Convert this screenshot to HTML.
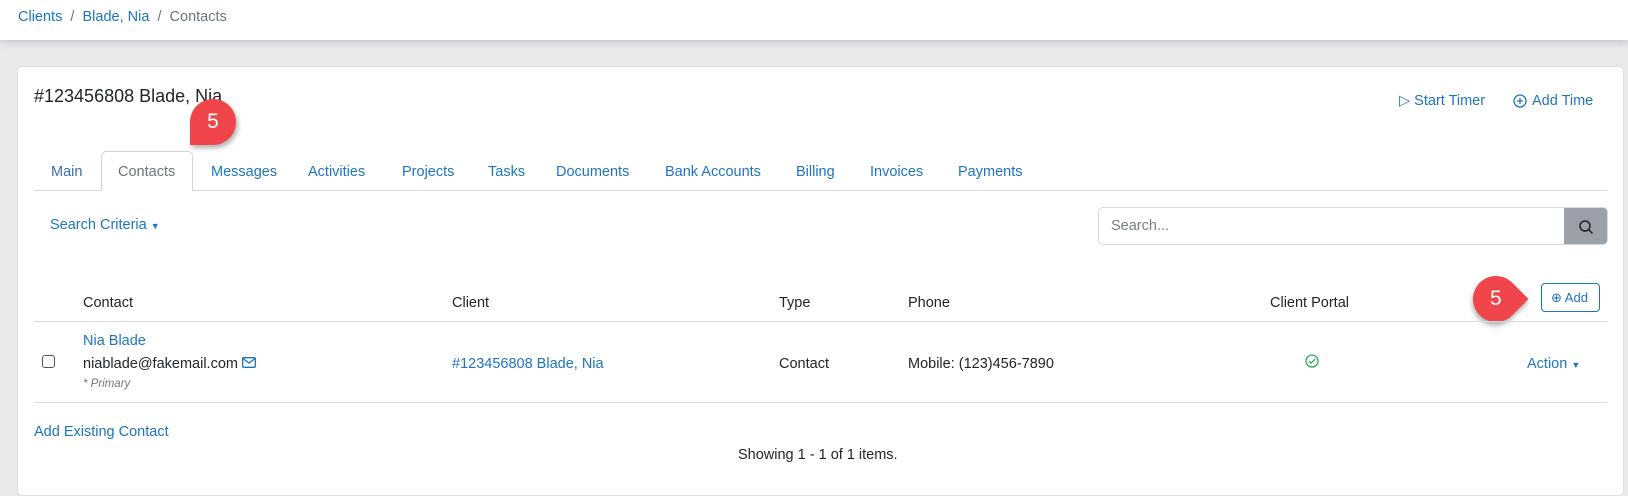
<!DOCTYPE html>
<html><head><style>
*{box-sizing:border-box;margin:0;padding:0}
body{width:1628px;height:478px;overflow:hidden;background:#e9eaec;font-family:"Liberation Sans",sans-serif;font-size:14.5px;color:#212529;position:relative}
.top{position:absolute;left:0;top:0;width:1628px;height:40px;background:#fff;box-shadow:0 2px 8px rgba(0,0,0,.18)}
.a{position:absolute;white-space:nowrap}
.b{color:#1f74bf}
.card{position:absolute;left:17px;top:66px;width:1607px;height:430px;background:#fff;border:1px solid #dcdee2;border-radius:5px}
.hl{position:absolute;height:1px;background:#d8dadd}
.pin{position:absolute;width:46px;height:46px;background:#f0454b;color:#fff;font-size:21px;display:flex;align-items:center;justify-content:center;box-shadow:2px 3px 5px rgba(0,0,0,.3)}
</style></head><body>
<div class="top"></div>
<div class="a" style="left:18px;top:9px"><span class="b">Clients</span> <span style="color:#6c757d">&nbsp;/&nbsp;</span> <span class="b">Blade, Nia</span> <span style="color:#6c757d">&nbsp;/&nbsp; Contacts</span></div>
<div class="card"></div>
<div class="a" style="left:34px;top:86px;font-size:18px">#123456808 Blade, Nia</div>
<div class="a b" style="left:1399px;top:93px">▷ Start Timer</div>
<svg class="a" style="left:1513px;top:94px" width="14" height="14" viewBox="0 0 14 14"><circle cx="7" cy="7" r="6" fill="none" stroke="#1f74bf" stroke-width="1.3"/><path d="M7 4v6M4 7h6" stroke="#1f74bf" stroke-width="1.3"/></svg>
<div class="a b" style="left:1532px;top:93px">Add Time</div>
<div class="hl" style="left:34px;top:190px;width:1573px"></div>
<div style="position:absolute;left:101px;top:151px;width:92px;height:40px;background:#fff;border:1px solid #d0d3d7;border-bottom:none;border-radius:5px 5px 0 0"></div>
<div class="a" style="top:164px;left:51px;color:#3d6ea8">Main</div>
<div class="a" style="top:164px;left:118px;color:#6c757d">Contacts</div>
<div class="a b" style="top:164px;left:211px">Messages</div>
<div class="a b" style="top:164px;left:308px">Activities</div>
<div class="a b" style="top:164px;left:402px">Projects</div>
<div class="a b" style="top:164px;left:488px">Tasks</div>
<div class="a b" style="top:164px;left:556px">Documents</div>
<div class="a b" style="top:164px;left:665px">Bank Accounts</div>
<div class="a b" style="top:164px;left:796px">Billing</div>
<div class="a b" style="top:164px;left:870px">Invoices</div>
<div class="a b" style="top:164px;left:958px">Payments</div>
<div class="pin" style="left:190px;top:99px;border-radius:50% 50% 50% 0">5</div>
<div class="a b" style="left:50px;top:217px">Search Criteria <span style="font-size:9px">▼</span></div>
<div style="position:absolute;left:1098px;top:207px;width:510px;height:38px;border:1px solid #d6d8db;border-radius:5px;overflow:hidden;background:#fff">
<div class="a" style="left:12px;top:10px;color:#7a7f85">Search...</div>
<div style="position:absolute;right:0;top:0;width:43px;height:38px;background:#9aa1ab"><svg width="16" height="16" style="position:absolute;left:14px;top:11px" viewBox="0 0 16 16"><circle cx="7" cy="7" r="5" fill="none" stroke="#222" stroke-width="1.5"/><path d="M11 11l3.5 3.5" stroke="#222" stroke-width="1.5"/></svg></div></div>
<div class="a" style="left:83px;top:295px">Contact</div>
<div class="a" style="left:452px;top:295px">Client</div>
<div class="a" style="left:779px;top:295px">Type</div>
<div class="a" style="left:908px;top:295px">Phone</div>
<div class="a" style="left:1270px;top:295px">Client Portal</div>
<div style="position:absolute;left:1541px;top:283px;width:59px;height:29px;border:1px solid #1f74bf;border-radius:4px;font-size:13px;color:#1f74bf;padding:6px 0 0 9px">⊕ Add</div>
<div class="pin" style="left:1473px;top:276px;border-radius:50% 0 50% 50%;transform:rotate(45deg)"><span style="transform:rotate(-45deg)">5</span></div>
<div class="hl" style="left:34px;top:321px;width:1573px"></div>
<div class="a b" style="left:83px;top:333px">Nia Blade</div>
<div style="position:absolute;left:42px;top:355px;width:13px;height:13px;border:1px solid #555;border-radius:3px"></div>
<div class="a" style="left:83px;top:356px">niablade@fakemail.com <svg width="14" height="11" viewBox="0 0 14 11" style="vertical-align:0"><rect x=".7" y=".7" width="12.6" height="9.6" rx="1" fill="none" stroke="#1f74bf" stroke-width="1.3"/><path d="M1 1.5l6 4.5 6-4.5" fill="none" stroke="#1f74bf" stroke-width="1.3"/></svg></div>
<div class="a" style="left:83px;top:378px;font-size:11.5px;font-style:italic;color:#777">* Primary</div>
<div class="a b" style="left:452px;top:356px">#123456808 Blade, Nia</div>
<div class="a" style="left:779px;top:356px">Contact</div>
<div class="a" style="left:908px;top:356px">Mobile: (123)456-7890</div>
<svg class="a" style="left:1305px;top:354px" width="14" height="14" viewBox="0 0 14 14"><circle cx="7" cy="7" r="6" fill="none" stroke="#2eaa55" stroke-width="1.3"/><path d="M4 7.2l2 2 4-4.2" fill="none" stroke="#2eaa55" stroke-width="1.3"/></svg>
<div class="a b" style="left:1527px;top:356px">Action <span style="font-size:9px">▼</span></div>
<div class="hl" style="left:34px;top:402px;width:1573px"></div>
<div class="a b" style="left:34px;top:424px">Add Existing Contact</div>
<div class="a" style="left:738px;top:447px">Showing 1 - 1 of 1 items.</div>
</body></html>
